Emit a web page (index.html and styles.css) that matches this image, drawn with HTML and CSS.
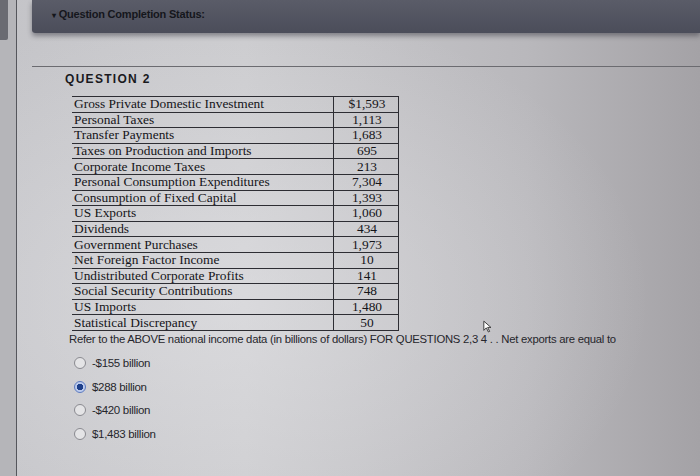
FILE: index.html
```html
<!DOCTYPE html>
<html>
<head>
<meta charset="utf-8">
<link rel="stylesheet" href="styles.css">
</head>
<body>
<div class="screen">
  <div class="rail"><div class="rail-tab"></div></div>
  <div class="main">
    <div class="banner"><span class="caret">▾</span> Question Completion Status:</div>
    <div class="question">
      <h2 class="qtitle">QUESTION 2</h2>
      <table class="data">
        <tr><td class="lbl">Gross Private Domestic Investment</td><td class="val">$1,593</td></tr>
        <tr><td class="lbl">Personal Taxes</td><td class="val">1,113</td></tr>
        <tr><td class="lbl">Transfer Payments</td><td class="val">1,683</td></tr>
        <tr><td class="lbl">Taxes on Production and Imports</td><td class="val">695</td></tr>
        <tr><td class="lbl">Corporate Income Taxes</td><td class="val">213</td></tr>
        <tr><td class="lbl">Personal Consumption Expenditures</td><td class="val">7,304</td></tr>
        <tr><td class="lbl">Consumption of Fixed Capital</td><td class="val">1,393</td></tr>
        <tr><td class="lbl">US Exports</td><td class="val">1,060</td></tr>
        <tr><td class="lbl">Dividends</td><td class="val">434</td></tr>
        <tr><td class="lbl">Government Purchases</td><td class="val">1,973</td></tr>
        <tr><td class="lbl">Net Foreign Factor Income</td><td class="val">10</td></tr>
        <tr><td class="lbl">Undistributed Corporate Profits</td><td class="val">141</td></tr>
        <tr><td class="lbl">Social Security Contributions</td><td class="val">748</td></tr>
        <tr><td class="lbl">US Imports</td><td class="val">1,480</td></tr>
        <tr><td class="lbl">Statistical Discrepancy</td><td class="val">50</td></tr>
      </table>
      <p class="prompt">Refer to the ABOVE national income data (in billions of dollars) FOR QUESTIONS 2,3 4 . . Net exports are equal to</p>
      <ul class="options">
        <li class="opt"><span class="radio"></span>-$155 billion</li>
        <li class="opt"><span class="radio checked"></span>$288 billion</li>
        <li class="opt"><span class="radio"></span>-$420 billion</li>
        <li class="opt"><span class="radio"></span>$1,483 billion</li>
      </ul>
    </div>
  </div>
  <svg class="cursor" width="10" height="14" viewBox="0 0 12 16"><path d="M1 1 L1 12 L4 9 L6.5 14 L8 13.3 L5.6 8.5 L9.5 8.5 Z" fill="#fff" stroke="#222" stroke-width="1"/></svg>
</div>
</body>
</html>
```

FILE: styles.css
```css
html, body {
  margin: 0;
  padding: 0;
}
body {
  width: 700px;
  height: 476px;
  overflow: hidden;
  font-family: "Liberation Sans", Arial, sans-serif;
}
.screen {
  position: relative;
  display: flex;
  width: 700px;
  height: 476px;
  background:
    radial-gradient(ellipse 420px 300px at 230px 300px, rgba(232,232,235,0.5), rgba(232,232,235,0) 100%),
    linear-gradient(90deg, #c4c4c8 0%, #cbcbce 35%, #b9b8bc 75%, #a4a2a6 100%);
}
.rail {
  width: 16px;
  flex: none;
  border-right: 1px solid #55565c;
  background: #b5b5b9;
}
.rail-tab {
  width: 8px;
  height: 40px;
  background: #6a6b72;
  border-bottom-right-radius: 2px;
}
.main {
  flex: 1;
  display: flex;
  flex-direction: column;
  padding-left: 15px;
}
.banner {
  height: 33px;
  background: linear-gradient(180deg, #5a5c68 0%, #4b4d5a 100%);
  border-bottom-left-radius: 3px;
  box-shadow: 0 3px 5px rgba(40,40,50,0.45);
  color: #15161c;
  font-weight: bold;
  font-size: 11px;
  padding: 8px 0 0 20px;
  box-sizing: border-box;
  letter-spacing: -0.2px;
}
.caret {
  font-size: 8px;
}
.question {
  margin-top: 33px;
  border-top: 1px solid #6b6b70;
  padding-left: 33px;
}
.qtitle {
  margin: 5px 0 0 0;
  font-size: 12px;
  font-weight: bold;
  letter-spacing: 1.3px;
  color: #1a1a1e;
}
.data {
  margin: 10px 0 0 7px;
  border-collapse: collapse;
  font-family: "Liberation Serif", "Times New Roman", serif;
  font-size: 13.4px;
  color: #141418;
}
.data td {
  border-bottom: 1px solid #2d2d33;
  height: 14.6px;
  line-height: 14px;
  padding: 0 0 0 2px;
}
.data tr:first-child td {
  border-top: 1px solid #2d2d33;
}
.lbl {
  width: 259px;
}
.val {
  width: 62px;
  text-align: center;
  border-left: 1px solid #2d2d33;
  border-right: 1px solid #2d2d33;
}
.prompt {
  margin: 2px 0 0 4px;
  font-size: 11.3px;
  color: #26262c;
  letter-spacing: -0.25px;
}
.options {
  list-style: none;
  margin: 11px 0 0 9px;
  padding: 0;
  display: flex;
  flex-direction: column;
  gap: 9.7px;
}
.opt {
  display: flex;
  align-items: center;
  gap: 6px;
  font-size: 11.5px;
  color: #26262c;
  height: 14px;
  letter-spacing: -0.3px;
}
.radio {
  width: 10px;
  height: 10px;
  border-radius: 50%;
  border: 1px solid #8a8a90;
  background: #e4e4e6;
  box-sizing: content-box;
  flex: none;
}
.radio.checked {
  background: radial-gradient(circle, #1d3f8a 0 3px, #bccbed 3.5px);
  border-color: #5d7bc0;
}
.cursor {
  position: absolute;
  left: 483px;
  top: 320px;
}
```
